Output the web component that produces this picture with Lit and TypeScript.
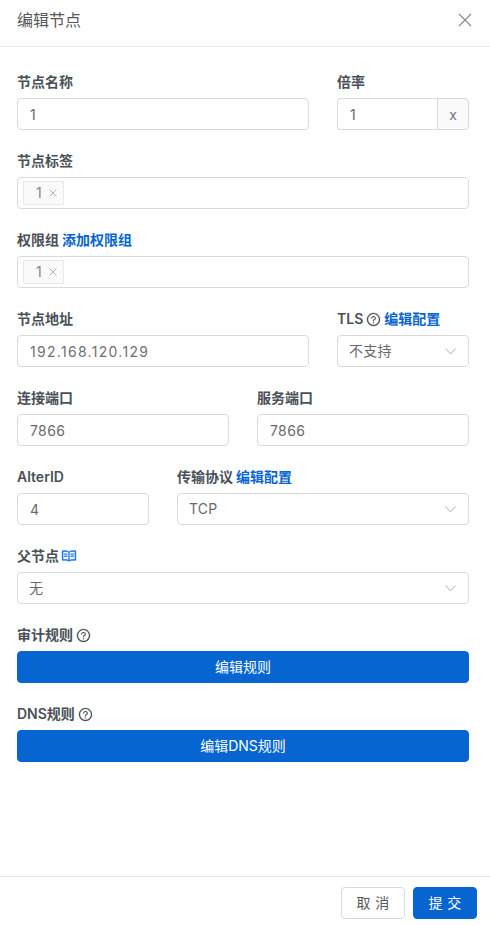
import { LitElement, html, css, svg } from "lit";
import { customElement } from "lit/decorators.js";

const q = html`<svg class="q" viewBox="0 0 1024 1024" fill="currentColor" stroke="currentColor" stroke-width="16"><path d="M512 64C264.6 64 64 264.6 64 512s200.6 448 448 448 448-200.6 448-448S759.4 64 512 64zm0 820c-205.4 0-372-166.6-372-372s166.6-372 372-372 372 166.6 372 372-166.6 372-372 372z"/><path d="M623.6 316.7C593.6 290.4 554 276 512 276s-81.6 14.5-111.6 40.7C369.2 344 352 380.7 352 420v7.6c0 4.4 3.6 8 8 8h48c4.4 0 8-3.6 8-8V420c0-44.1 43.1-80 96-80s96 35.9 96 80c0 31.1-22 59.6-56.1 72.7-21.2 8.1-39.2 22.3-52.1 40.9-13.1 19-19.9 41.8-19.9 64.9V620c0 4.4 3.6 8 8 8h48c4.4 0 8-3.6 8-8v-22.7a48.3 48.3 0 0 1 30.9-44.8c59-22.7 97.1-74.7 97.1-132.5.1-39.3-17.1-76-48.3-103.3zM472 732a40 40 0 1 0 80 0 40 40 0 1 0-80 0z"/></svg>`;
const book = html`<svg class="book" viewBox="0 0 1024 1024" fill="currentColor" stroke="currentColor" stroke-width="24"><path d="M928 161H699.2c-49.1 0-97.1 14.1-138.4 40.7L512 233l-48.8-31.3A255.2 255.2 0 0 0 324.8 161H96c-17.7 0-32 14.3-32 32v568c0 17.7 14.3 32 32 32h228.8c49.1 0 97.1 14.1 138.4 40.7l44.4 28.6c1.3.8 2.8 1.3 4.3 1.3s3-.4 4.3-1.3l44.4-28.6C602 807.1 650.1 793 699.2 793H928c17.7 0 32-14.3 32-32V193c0-17.7-14.3-32-32-32zM324.8 721H136V233h188.8c35.4 0 69.8 10.1 99.5 29.2l48.8 31.3 6.9 4.5v462c-47.6-25.6-100.8-39-155.2-39zm563.2 0H699.2c-54.4 0-107.6 13.4-155.2 39V298l6.9-4.5 48.8-31.3c29.7-19.1 64.1-29.2 99.5-29.2H888v488zM396.9 361H211.1c-3.9 0-7.1 3.4-7.1 7.5v45c0 4.1 3.2 7.5 7.1 7.5h185.7c3.9 0 7.1-3.4 7.1-7.5v-45c.1-4.1-3.1-7.5-7-7.5zm223.1 7.5v45c0 4.1 3.2 7.5 7.1 7.5h185.7c3.9 0 7.1-3.4 7.1-7.5v-45c0-4.1-3.2-7.5-7.1-7.5H627.1c-3.9 0-7.1 3.4-7.1 7.5zM396.9 501H211.1c-3.9 0-7.1 3.4-7.1 7.5v45c0 4.1 3.2 7.5 7.1 7.5h185.7c3.9 0 7.1-3.4 7.1-7.5v-45c.1-4.1-3.1-7.5-7-7.5zm416 0H627.1c-3.9 0-7.1 3.4-7.1 7.5v45c0 4.1 3.2 7.5 7.1 7.5h185.7c3.9 0 7.1-3.4 7.1-7.5v-45c.1-4.1-3.1-7.5-7-7.5z"/></svg>`;
const chev = html`<svg class="chev" viewBox="0 0 12 7" fill="none" stroke="currentColor" stroke-width="1.1"><path d="M.6.6 6 6.2 11.4.6"/></svg>`;
const xIcon = svg`<path d="M1 1 13 13M13 1 1 13"/>`;

@customElement("app-root")
export class AppRoot extends LitElement {
  static styles = css`
    :host { display: flex; flex-direction: column; height: 925px; background: #fff; color: #6a6a6a;
      font-family: Inter, "Noto Sans CJK SC", sans-serif; font-size: 14px; line-height: 22px; box-sizing: border-box; }
    * { box-sizing: border-box; }
    .head { height: 47px; flex: none; display: flex; align-items: center; justify-content: space-between;
      padding: 0 18px 6px 17px; border-bottom: 1px solid #e8e8e8; font-size: 16px; color: #575757; }
    .close { width: 14px; height: 14px; color: #8c8c8c; display: block; }
    .body { flex: 1; padding: 24px 21px 0 17px; display: flex; flex-direction: column; gap: 20px; }
    .row { display: grid; gap: 28px; }
    .one { grid-template-columns: 1fr; }
    .r-wide { grid-template-columns: 292px 132px; }
    .half { grid-template-columns: 212px 212px; }
    .r-narrow { grid-template-columns: 132px 292px; }
    .label { height: 22px; margin-bottom: 5px; font-weight: 600; font-size: 14px; color: #495057; display: flex; align-items: center; gap: 3px; white-space: nowrap; }
    a { color: #0665d0; text-decoration: none; }
    .box { height: 32px; border: 1px solid #d9d9d9; border-radius: 4px; display: flex; align-items: center; background: #fff; }
    .input { padding: 2px 0 0 12px; letter-spacing: .4px; }
    .ip { letter-spacing: 1.3px; color: #707070; }
    .sel { padding: 0 12px 0 11px; justify-content: space-between; letter-spacing: .2px; }
    .group { display: flex; }
    .group .input { flex: 1; border-radius: 4px 0 0 4px; border-right: 0; }
    .suffix { width: 32px; height: 32px; padding-top: 2px; border: 1px solid #d9d9d9; border-radius: 0 4px 4px 0; background: #fafafa; color: #757575; display: flex; align-items: center; justify-content: center; }
    .tagbox { padding-left: 5px; }
    .tag { width: 41px; height: 24px; border: 1px solid #e8e8e8; border-radius: 2px; background: #fafafa; display: flex; align-items: center; padding-left: 12px; gap: 7px; color: #858585; }
    .tag svg { width: 8px; height: 8px; color: #a6a6a6; }
    .q { width: 15px; height: 15px; color: #495057; flex: none; }
    .book { width: 16px; height: 16px; color: #1f7ae0; flex: none; margin-left: -1px; }
    .chev { width: 11px; height: 6.5px; color: #bfbfbf; flex: none; }
    button { font: inherit; border-radius: 4px; height: 32px; cursor: pointer; }
    .primary { background: #0665d0; border: 1px solid #0665d0; color: #fff; }
    .wide { width: 100%; display: block; }
    .foot { height: 49px; flex: none; border-top: 1px solid #e8e8e8; display: flex; justify-content: flex-end; gap: 8px; padding: 10px 13px 0 0; }
    .foot button { width: 64px; padding: 0; }
    .foot span { letter-spacing: .34em; margin-right: -.34em; }
    .default { background: #fff; border: 1px solid #d9d9d9; color: #575757; }
  `;

  private tagField() {
    return html`<div class="box tagbox"><div class="tag">1<svg viewBox="0 0 14 14" fill="none" stroke="currentColor" stroke-width="1.5">${xIcon}</svg></div></div>`;
  }

  render() {
    return html`
      <div class="head"><span>编辑节点</span><svg class="close" viewBox="0 0 14 14" fill="none" stroke="currentColor" stroke-width="1.2">${xIcon}</svg></div>
      <div class="body">
        <div class="row r-wide">
          <div><div class="label">节点名称</div><div class="box input">1</div></div>
          <div><div class="label">倍率</div><div class="group"><div class="box input">1</div><div class="suffix">x</div></div></div>
        </div>
        <div class="row one"><div><div class="label">节点标签</div>${this.tagField()}</div></div>
        <div class="row one"><div><div class="label">权限组 <a href="#">添加权限组</a></div>${this.tagField()}</div></div>
        <div class="row r-wide">
          <div><div class="label">节点地址</div><div class="box input ip">192.168.120.129</div></div>
          <div><div class="label">TLS ${q} <a href="#">编辑配置</a></div><div class="box sel"><span>不支持</span>${chev}</div></div>
        </div>
        <div class="row half">
          <div><div class="label">连接端口</div><div class="box input">7866</div></div>
          <div><div class="label">服务端口</div><div class="box input">7866</div></div>
        </div>
        <div class="row r-narrow">
          <div><div class="label">AlterID</div><div class="box input">4</div></div>
          <div><div class="label">传输协议 <a href="#">编辑配置</a></div><div class="box sel"><span>TCP</span>${chev}</div></div>
        </div>
        <div class="row one"><div><div class="label">父节点 ${book}</div><div class="box sel"><span>无</span>${chev}</div></div></div>
        <div class="row one"><div><div class="label">审计规则 ${q}</div><button class="primary wide">编辑规则</button></div></div>
        <div class="row one"><div><div class="label">DNS规则 ${q}</div><button class="primary wide">编辑DNS规则</button></div></div>
      </div>
      <div class="foot"><button class="default"><span>取消</span></button><button class="primary"><span>提交</span></button></div>
    `;
  }
}
